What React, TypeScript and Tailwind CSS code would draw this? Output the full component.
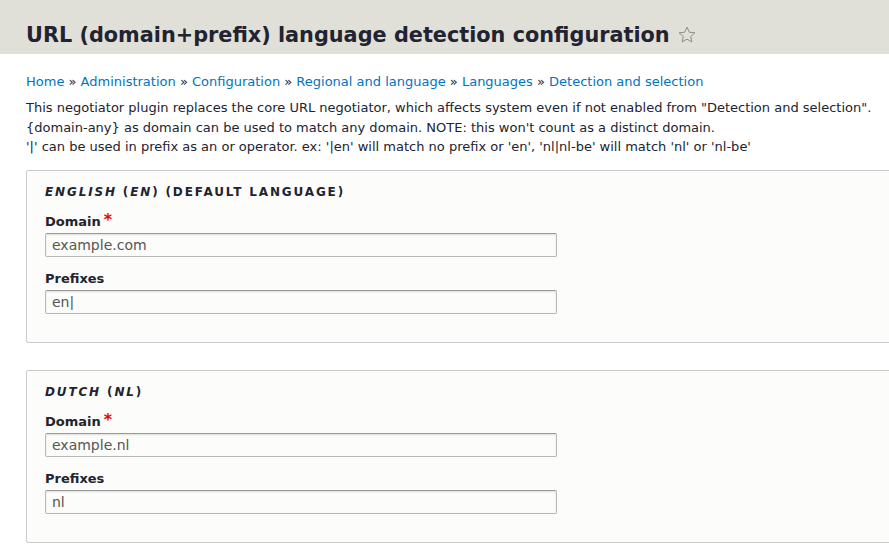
import React from 'react';

const font = { fontFamily: '"DejaVu Sans", Verdana, sans-serif' };

function Field({ label, value, required }: { label: string; value: string; required?: boolean }) {
  return (
    <div className="flex flex-col">
      <label className="flex h-[18px] items-start text-[13px] font-bold leading-[18px] text-[#222330]">
        {label}
        {required && <span className="ml-[3px] mt-[-1px] text-[16px] leading-[16px] text-[#e00]">*</span>}
      </label>
      <input
        readOnly
        value={value}
        className="mt-[2px] h-[24px] w-[512px] rounded-[2px] border border-[#b8b8b8] border-t-[#999] bg-[#fcfcfa] px-[6px] text-[14px] text-[#555] shadow-[inset_0_1px_2px_rgba(0,0,0,0.125)] outline-none"
        style={font}
      />
    </div>
  );
}

function LangFieldset({ legend, fields }: { legend: React.ReactNode; fields: { label: string; value: string; required?: boolean }[] }) {
  return (
    <div className="-mr-[10px] rounded-[2px] border border-[#ccc] bg-[#fcfcfa] px-[18px] pt-[13px] pb-[28px]">
      <div className="text-[12px] font-bold uppercase leading-[16px] tracking-[1.85px] text-[#222330]">{legend}</div>
      <div className="mt-[13px] flex flex-col gap-[13px]">
        {fields.map((f) => (
          <Field key={f.label} {...f} />
        ))}
      </div>
    </div>
  );
}

export default function App() {
  const crumbs = ['Home', 'Administration', 'Configuration', 'Regional and language', 'Languages', 'Detection and selection'];

  return (
    <div className="h-screen w-full overflow-hidden bg-white text-[#222330]" style={font}>
      {/* Page header */}
      <div className="h-[54px] bg-[#e0e0d8] pl-[26px] pt-[21px]">
        <h1 className="flex items-center text-[20.8px] font-bold leading-[28px]">
          URL (domain+prefix) language detection configuration
          <svg width="20" height="20" viewBox="0 0 24 24" className="ml-[7px]" fill="none" stroke="#8e8e86" strokeWidth="1.2" strokeLinejoin="round">
            <path d="M12 2.5l2.8 6.2 6.7.6-5.1 4.5 1.5 6.6L12 17l-5.9 3.4 1.5-6.6-5.1-4.5 6.7-.6z" />
          </svg>
        </h1>
      </div>

      <div className="pl-[26px]">
        {/* Breadcrumb */}
        <nav className="mt-[18px] text-[13px] leading-[20px]">
          {crumbs.map((c, i) => (
            <span key={c}>
              {i > 0 && <span className="text-[#222330]"> » </span>}
              <a className="text-[#0074bd]" href="#">{c}</a>
            </span>
          ))}
        </nav>

        <div className="mt-[6px] text-[13px] leading-[19.5px]">
          <p>This negotiator plugin replaces the core URL negotiator, which affects system even if not enabled from "Detection and selection".</p>
          <p>{'{domain-any}'} as domain can be used to match any domain. NOTE: this won't count as a distinct domain.</p>
          <p>'|' can be used in prefix as an or operator. ex: '|en' will match no prefix or 'en', 'nl|nl-be' will match 'nl' or 'nl-be'</p>
        </div>

        <div className="mt-[13px] flex flex-col gap-[27px]">
          <LangFieldset
            legend={<><em>English</em> (<em>en</em>) (Default language)</>}
            fields={[
              { label: 'Domain', value: 'example.com', required: true },
              { label: 'Prefixes', value: 'en|' },
            ]}
          />
          <LangFieldset
            legend={<><em>Dutch</em> (<em>nl</em>)</>}
            fields={[
              { label: 'Domain', value: 'example.nl', required: true },
              { label: 'Prefixes', value: 'nl' },
            ]}
          />
        </div>
      </div>
    </div>
  );
}
